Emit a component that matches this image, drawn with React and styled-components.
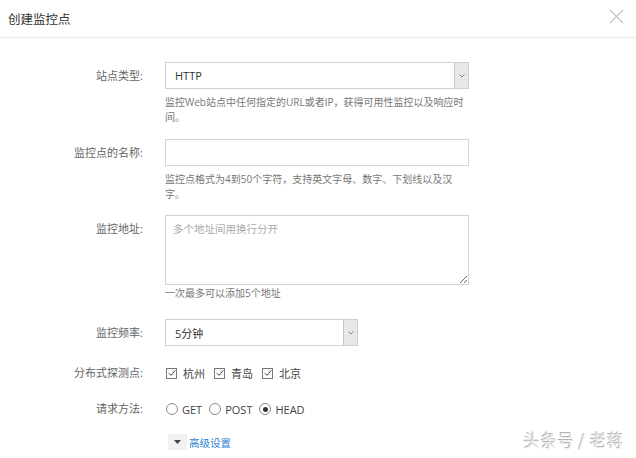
import styled, { createGlobalStyle } from 'styled-components';

const GlobalStyle = createGlobalStyle`
  html, body {
    margin: 0;
    padding: 0;
    background: #fff;
  }
  body {
    font-family: "Open Sans", "Noto Sans CJK SC", sans-serif;
    color: #333;
  }
`;

//Dialog - whole modal panel
const App = () => {
  return (
    <Dialog>
      <GlobalStyle />
      <Header>
        <Title>创建监控点</Title>
        <CloseBtn aria-label='close'>
          <svg width='15' height='15' viewBox='0 0 15 15'>
            <path d='M1 1 L14 14 M14 1 L1 14' stroke='#c4c4c4' strokeWidth='1.2' fill='none' />
          </svg>
        </CloseBtn>
      </Header>

      <Form>
        <Row>
          <Label>站点类型:</Label>
          <Field>
            <Select $width='304px'>
              <span>HTTP</span>
              <Arrow><Chevron /></Arrow>
            </Select>
            <Help>监控Web站点中任何指定的URL或者IP，获得可用性监控以及响应时间。</Help>
          </Field>
        </Row>

        <Row $mt='14px'>
          <Label>监控点的名称:</Label>
          <Field>
            <Input />
            <Help>监控点格式为4到50个字符，支持英文字母、数字、下划线以及汉字。</Help>
          </Field>
        </Row>

        <Row $mt='13px'>
          <Label $top>监控地址:</Label>
          <Field>
            <Area placeholder='多个地址间用换行分开' />
            <Help $mt='1px'>一次最多可以添加5个地址</Help>
          </Field>
        </Row>

        <Row $mt='18px'>
          <Label>监控频率:</Label>
          <Field>
            <Select $width='193px'>
              <span>5分钟</span>
              <Arrow><Chevron /></Arrow>
            </Select>
          </Field>
        </Row>

        <Row $mt='18px' $small>
          <Label $small>分布式探测点:</Label>
          <Options $gap='8px'>
            {['杭州', '青岛', '北京'].map(city => (
              <Option key={city} $gap='6px'>
                <CheckBox>
                  <svg width='8' height='8' viewBox='0 0 8 8'>
                    <path d='M0.8 4.2 L3 6.4 L7.3 1.2' stroke='#444' strokeWidth='1' fill='none' />
                  </svg>
                </CheckBox>
                {city}
              </Option>
            ))}
          </Options>
        </Row>

        <Row $mt='18px' $small>
          <Label $small>请求方法:</Label>
          <Options $gap='6px'>
            {['GET', 'POST', 'HEAD'].map(m => (
              <Option key={m} $gap='4px'>
                <Radio $on={m === 'HEAD'} />
                {m}
              </Option>
            ))}
          </Options>
        </Row>

        <Row $mt='15px' $small>
          <span />
          <Advanced>
            <Toggle>
              <svg width='7' height='4' viewBox='0 0 7 4'>
                <path d='M0 0 L7 0 L3.5 4 Z' fill='#444' />
              </svg>
            </Toggle>
            <MoreLink>高级设置</MoreLink>
          </Advanced>
        </Row>
      </Form>

      <Watermark>头条号 / 老蒋</Watermark>
    </Dialog>
  );
};

const Chevron = () => (
  <svg width='6' height='4' viewBox='0 0 6 4'>
    <path d='M0.5 0.5 L3 3 L5.5 0.5' stroke='#777' strokeWidth='0.9' fill='none' />
  </svg>
);

const Dialog = styled.div`
  position: relative;
  width: 636px;
  height: 458px;
  overflow: hidden;
  background: #fff;
`;

const Header = styled.div`
  display: flex;
  align-items: center;
  justify-content: space-between;
  height: 37px;
  padding: 0 12px 0 8px;
  border-bottom: 1px solid #ececec;
`;

const Title = styled.h3`
  margin: 0;
  font-size: 12.5px;
  font-weight: 400;
  color: #333;
`;

const CloseBtn = styled.button`
  display: flex;
  background: transparent;
  border: none;
  padding: 0;
  margin-top: -4px;
  cursor: pointer;
`;

const Form = styled.div`
  display: flex;
  flex-direction: column;
  padding-top: 24px;
`;

const Row = styled.div`
  display: grid;
  grid-template-columns: 143px 304px;
  column-gap: 22px;
  margin-top: ${p => p.$mt || '0'};
  min-height: ${p => (p.$small ? '18px' : 'auto')};
`;

const Label = styled.label`
  text-align: right;
  font-size: 11px;
  color: #666;
  line-height: ${p => (p.$small ? '18px' : p.$top ? '14px' : '27px')};
  padding-top: ${p => (p.$top ? '7px' : '0')};
`;

const Field = styled.div`
  display: flex;
  flex-direction: column;
`;

const Select = styled.div`
  display: flex;
  align-items: stretch;
  justify-content: space-between;
  box-sizing: border-box;
  width: ${p => p.$width};
  height: 27px;
  border: 1px solid #cfcfcf;
  font-size: 11px;
  color: #333;

  span {
    align-self: center;
    padding-left: 9px;
  }
`;

const Arrow = styled.div`
  display: flex;
  align-items: center;
  justify-content: center;
  width: 13px;
  background: #e8e8e8;
  border-left: 1px solid #c8c8c8;
`;

const Input = styled.input`
  box-sizing: border-box;
  width: 304px;
  height: 27px;
  border: 1px solid #d4d4d4;
  outline: none;
  font-family: inherit;
`;

const Area = styled.textarea`
  box-sizing: border-box;
  width: 304px;
  height: 70px;
  margin: 0;
  padding: 6px 7px;
  border: 1px solid #d4d4d4;
  outline: none;
  font-family: inherit;
  font-size: 10.5px;
  line-height: 14px;
  display: block;

  &::placeholder {
    color: #aaa;
  }
`;

const Help = styled.p`
  margin: ${p => p.$mt || '6px'} 0 0;
  font-size: 10px;
  line-height: 15px;
  color: #777;
`;

const Options = styled.div`
  display: flex;
  align-items: center;
  gap: ${p => p.$gap};
`;

const Option = styled.label`
  display: flex;
  align-items: center;
  gap: ${p => p.$gap};
  font-size: 11px;
  color: #444;
  padding-left: 1px;
`;

const CheckBox = styled.span`
  display: flex;
  align-items: center;
  justify-content: center;
  box-sizing: border-box;
  width: 11px;
  height: 11px;
  border: 1px solid #777;
  background: #fff;
`;

const Radio = styled.span`
  display: flex;
  align-items: center;
  justify-content: center;
  box-sizing: border-box;
  width: 12px;
  height: 12px;
  border-radius: 50%;
  border: 1px solid #888;

  &::after {
    content: '';
    display: ${p => (p.$on ? 'block' : 'none')};
    width: 5px;
    height: 5px;
    border-radius: 50%;
    background: #333;
  }
`;

const Advanced = styled.div`
  display: flex;
  align-items: center;
  gap: 2px;
  padding-left: 3px;
`;

const Toggle = styled.button`
  display: flex;
  align-items: center;
  justify-content: center;
  width: 19px;
  height: 16px;
  padding: 0;
  border: none;
  background: #f1f1f1;
`;

const MoreLink = styled.a`
  font-size: 10.5px;
  color: #2d7fd1;
  cursor: pointer;
`;

const Watermark = styled.div`
  position: absolute;
  right: 12px;
  bottom: 6px;
  font-family: "Noto Sans CJK SC", sans-serif;
  font-size: 16.5px;
  color: #ececec;
  text-shadow: -1px -1px 0 #b5b5b5, 1px 1px 0 #fff;
  letter-spacing: 0.5px;
`;

export default App;
